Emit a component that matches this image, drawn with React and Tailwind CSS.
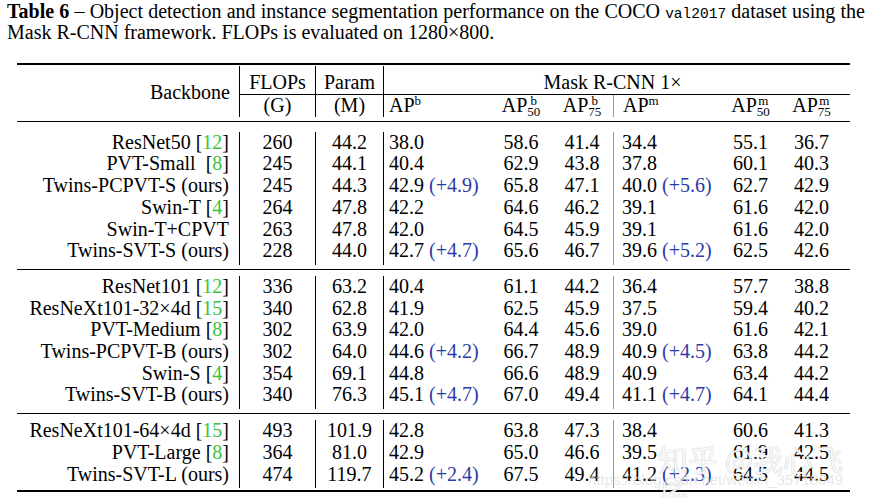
import React from "react";

const groups = [
  [
    ["ResNet50", "12", "260", "44.2", "38.0", null, "58.6", "41.4", "34.4", null, "55.1", "36.7"],
    ["PVT-Small\u00a0", "8", "245", "44.1", "40.4", null, "62.9", "43.8", "37.8", null, "60.1", "40.3"],
    ["Twins-PCPVT-S (ours)", null, "245", "44.3", "42.9", "+4.9", "65.8", "47.1", "40.0", "+5.6", "62.7", "42.9"],
    ["Swin-T", "4", "264", "47.8", "42.2", null, "64.6", "46.2", "39.1", null, "61.6", "42.0"],
    ["Swin-T+CPVT", null, "263", "47.8", "42.0", null, "64.5", "45.9", "39.1", null, "61.6", "42.0"],
    ["Twins-SVT-S (ours)", null, "228", "44.0", "42.7", "+4.7", "65.6", "46.7", "39.6", "+5.2", "62.5", "42.6"],
  ],
  [
    ["ResNet101", "12", "336", "63.2", "40.4", null, "61.1", "44.2", "36.4", null, "57.7", "38.8"],
    ["ResNeXt101-32×4d", "15", "340", "62.8", "41.9", null, "62.5", "45.9", "37.5", null, "59.4", "40.2"],
    ["PVT-Medium", "8", "302", "63.9", "42.0", null, "64.4", "45.6", "39.0", null, "61.6", "42.1"],
    ["Twins-PCPVT-B (ours)", null, "302", "64.0", "44.6", "+4.2", "66.7", "48.9", "40.9", "+4.5", "63.8", "44.2"],
    ["Swin-S", "4", "354", "69.1", "44.8", null, "66.6", "48.9", "40.9", null, "63.4", "44.2"],
    ["Twins-SVT-B (ours)", null, "340", "76.3", "45.1", "+4.7", "67.0", "49.4", "41.1", "+4.7", "64.1", "44.4"],
  ],
  [
    ["ResNeXt101-64×4d", "15", "493", "101.9", "42.8", null, "63.8", "47.3", "38.4", null, "60.6", "41.3"],
    ["PVT-Large", "8", "364", "81.0", "42.9", null, "65.0", "46.6", "39.5", null, "61.9", "42.5"],
    ["Twins-SVT-L (ours)", null, "474", "119.7", "45.2", "+2.4", "67.5", "49.4", "41.2", "+2.3", "64.5", "44.5"],
  ],
];

const cols = "grid grid-cols-[222px_76px_68px_108px_60px_62px_107px_61px_69px]";

const Ap = ({ sup, sub }) => (
  <span className="inline-flex items-start">
    <span>AP</span>
    <span className="inline-flex flex-col text-[13px] leading-[10px] mt-[1px]">
      <span>{sup}</span>
      {sub && <span className="mt-[1px]">{sub}</span>}
    </span>
  </span>
);

const Delta = ({ v }) => (v ? <span className="text-[#2b3aa8]"> ({v})</span> : null);

const Group = ({ rows, className }) => (
  <div className={`${cols} ${className}`}>
    <div className="flex flex-col items-end pr-[10px] pb-[3px]">
      {rows.map((r) => (
        <div key={r[0]}>
          {r[0]}
          {r[1] && (
            <>
              {" "}[<span className="text-[#3cc23c]">{r[1]}</span>]
            </>
          )}
        </div>
      ))}
    </div>
    <div className="flex flex-col items-center border-l border-black pb-[3px]">
      {rows.map((r) => (
        <div key={r[0]}>{r[2]}</div>
      ))}
    </div>
    <div className="flex flex-col items-center border-l border-black pb-[3px]">
      {rows.map((r) => (
        <div key={r[0]}>{r[3]}</div>
      ))}
    </div>
    <div className="flex flex-col border-l border-black pl-[5px] pb-[3px]">
      {rows.map((r) => (
        <div key={r[0]} className="whitespace-pre">
          {r[4]}
          <Delta v={r[5]} />
        </div>
      ))}
    </div>
    <div className="flex flex-col items-center">
      {rows.map((r) => (
        <div key={r[0]}>{r[6]}</div>
      ))}
    </div>
    <div className="flex flex-col items-center">
      {rows.map((r) => (
        <div key={r[0]}>{r[7]}</div>
      ))}
    </div>
    <div className="flex flex-col border-l border-[#9a9a9a] pl-[8px] pb-[3px]">
      {rows.map((r) => (
        <div key={r[0]} className="whitespace-pre">
          {r[8]}
          <Delta v={r[9]} />
        </div>
      ))}
    </div>
    <div className="flex flex-col items-center">
      {rows.map((r) => (
        <div key={r[0]}>{r[10]}</div>
      ))}
    </div>
    <div className="flex flex-col items-center pr-[8px]">
      {rows.map((r) => (
        <div key={r[0]}>{r[11]}</div>
      ))}
    </div>
  </div>
);

export default function App() {
  return (
    <div className="relative w-[870px] h-[498px] overflow-hidden bg-white text-black font-['Liberation_Serif',serif] text-[20px] leading-[21.7px]">
      <div className="pt-[1px] pl-[7px] leading-[21px]">
        <div className="w-[858px] text-justify [text-align-last:justify]">
          <b>Table 6</b> – Object detection and instance segmentation performance on the COCO{" "}
          <span className="font-['Liberation_Mono',monospace] text-[14.5px] leading-[0]">val2017</span> dataset using the
        </div>
        <div>Mask R-CNN framework. FLOPs is evaluated on 1280×800.</div>
      </div>

      <div className="ml-[17px] mt-[20px] w-[833px]">
        <div className="h-[2px] bg-black" />
        <div className={`${cols} mt-px mb-[4px]`}>
          <div className="row-span-2 flex items-center justify-end pr-[9px] pt-[2px]">Backbone</div>
          <div className="border-l border-black border-b border-b-black text-center pt-[6px]">FLOPs</div>
          <div className="border-l border-black border-b border-b-black text-center pt-[6px]">Param</div>
          <div className="col-span-6 border-l border-black border-b border-b-black text-center pt-[6px] pr-[9px]">
            Mask R-CNN 1×
          </div>
          <div className="border-l border-black text-center">(G)</div>
          <div className="border-l border-black text-center">(M)</div>
          <div className="border-l border-black pl-[5px]">
            <Ap sup="b" />
          </div>
          <div className="text-center">
            <Ap sup="b" sub="50" />
          </div>
          <div className="text-center">
            <Ap sup="b" sub="75" />
          </div>
          <div className="border-l border-[#9a9a9a] pl-[9px]">
            <Ap sup="m" />
          </div>
          <div className="text-center">
            <Ap sup="m" sub="50" />
          </div>
          <div className="text-center pr-[8px]">
            <Ap sup="m" sub="75" />
          </div>
        </div>
        <div className="h-px bg-black" />
        <Group rows={groups[0]} className="mt-[10px] mb-[4px]" />
        <div className="h-px bg-black" />
        <Group rows={groups[1]} className="mt-[6px] mb-[4px]" />
        <div className="h-px bg-black" />
        <Group rows={groups[2]} className="mt-[6px] mb-[2px]" />
        <div className="h-[2px] bg-black" />
      </div>

      <div className="absolute left-[658px] top-[440px] font-['Noto_Sans_CJK_SC',sans-serif] text-[30px] leading-[36px] text-white/90 [text-shadow:0_0_1px_rgba(0,0,0,0.35)]">
        知乎 @我心飞扬
      </div>
      <div className="absolute left-[588px] top-[471px] font-['Liberation_Sans',sans-serif] text-[15px] leading-[18px] text-[#e2e2e2]/80">
        https://blog.csdn.net/weixin_35718049
      </div>
    </div>
  );
}
